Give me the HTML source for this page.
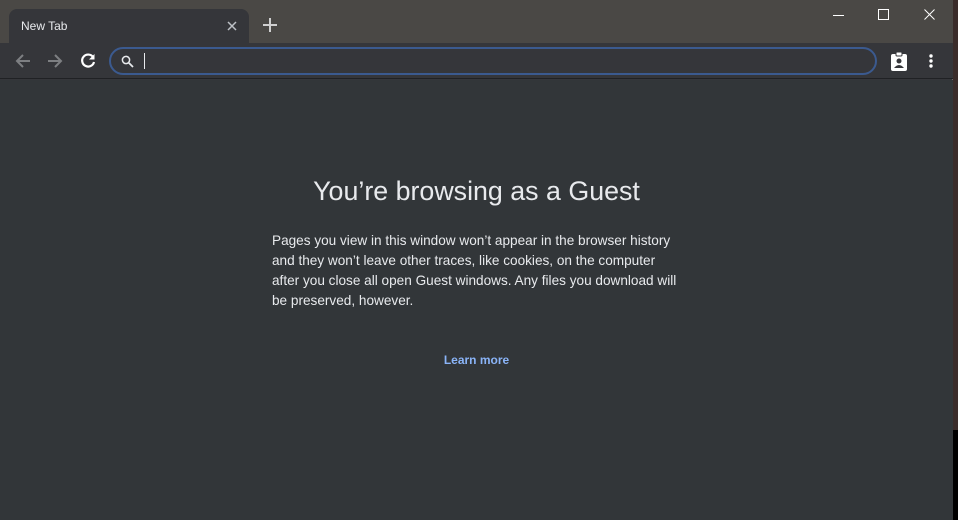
<!DOCTYPE html>
<html><head><style>
*{margin:0;padding:0;box-sizing:border-box}
body{width:958px;height:520px;overflow:hidden;background:#000;font-family:"Liberation Sans",sans-serif;position:relative}
#strip{position:absolute;left:953px;top:0;width:5px;height:430px;background:#3a2c2a}
#win{position:absolute;left:0;top:0;width:953px;height:520px;background:#35363a;border-right:1px solid #6a6a6a}
#frame{position:absolute;left:0;top:0;width:953px;height:43px;background:#4a4845}
#tab{position:absolute;left:9px;top:9px;width:240px;height:34px;background:#35363a;border-radius:8px 8px 0 0}
#tab span{position:absolute;left:12px;top:10px;font-size:12px;color:#e8eaed}
#toolbar{position:absolute;left:0;top:43px;width:953px;height:36px;background:#35363a;border-bottom:1px solid #202124}
#omni{position:absolute;left:109px;top:4px;width:768px;height:28px;border:2px solid #3b5a8f;border-radius:14px;background:#35363a}
#content{position:absolute;left:0;top:80px;width:953px;height:440px;background:#323639}
h1{position:absolute;left:0;width:953px;top:96px;text-align:center;font-weight:normal;font-size:26.8px;color:#e8eaed}
p{position:absolute;left:272px;top:151px;width:480px;white-space:nowrap;font-size:13.6px;line-height:20px;color:#e8eaed}
a{position:absolute;left:0;width:953px;text-align:center;top:273px;font-size:12px;font-weight:bold;color:#8ab4f8;text-decoration:none}
svg{position:absolute}
</style></head><body>
<div id="strip"></div>
<div id="win">
<div id="frame">
<div id="tab"><span>New Tab</span>
<svg style="left:218px;top:12px" width="10" height="10"><path d="M1 1L9 9M9 1L1 9" stroke="#bdc1c6" stroke-width="1.5"/></svg></div>
<svg style="left:263px;top:18px" width="14" height="14"><path d="M7 0V14M0 7H14" stroke="#d0d0d0" stroke-width="2"/></svg>
<svg style="left:833px;top:10px" width="12" height="12"><path d="M0 5.5H11" stroke="#fff" stroke-width="1"/></svg>
<svg style="left:878px;top:9px" width="12" height="12"><rect x="0.5" y="0.5" width="10" height="10" fill="none" stroke="#fff"/></svg>
<svg style="left:924px;top:9px" width="12" height="12"><path d="M0.5 0.5L10.5 10.5M10.5 0.5L0.5 10.5" stroke="#fff"/></svg>
</div>
<div id="toolbar">
<svg style="left:14px;top:9px" width="18" height="18"><path d="M16 9H3M9 3L3 9L9 15" stroke="#7d7f82" stroke-width="2" fill="none"/></svg>
<svg style="left:46px;top:9px" width="18" height="18"><path d="M2 9H15M9 3L15 9L9 15" stroke="#7d7f82" stroke-width="2" fill="none"/></svg>
<svg style="left:79px;top:9px" width="18" height="18"><path d="M14 5A6 6 0 1 0 15 10" stroke="#fff" stroke-width="2.2" fill="none"/><path d="M15.5 2V7.5H10Z" fill="#fff"/></svg>
<div id="omni">
<svg style="left:10px;top:6px" width="14" height="14"><circle cx="5" cy="5" r="3.6" stroke="#e8eaed" stroke-width="1.5" fill="none"/><path d="M8 8L12 12" stroke="#e8eaed" stroke-width="1.8"/></svg>
<div style="position:absolute;left:33px;top:4px;width:1px;height:16px;background:#e8eaed"></div>
</div>
<svg style="left:890px;top:8px" width="18" height="20"><rect x="1" y="3" width="16" height="17" rx="2" fill="#fff"/><rect x="6" y="1" width="6" height="4" rx="1" fill="#fff" stroke="#35363a"/><circle cx="9" cy="10" r="2.5" fill="#35363a"/><path d="M4 17Q9 11 14 17Z" fill="#35363a"/></svg>
<svg style="left:928px;top:10px" width="6" height="16"><circle cx="3" cy="3" r="1.7" fill="#fff"/><circle cx="3" cy="8" r="1.7" fill="#fff"/><circle cx="3" cy="13" r="1.7" fill="#fff"/></svg>
</div>
<div id="content">
<h1>You’re browsing as a Guest</h1>
<p>Pages you view in this window won’t appear in the browser history<br>and they won’t leave other traces, like cookies, on the computer<br>after you close all open Guest windows. Any files you download will<br>be preserved, however.</p>
<a>Learn more</a>
</div>
</div>
</body></html>
